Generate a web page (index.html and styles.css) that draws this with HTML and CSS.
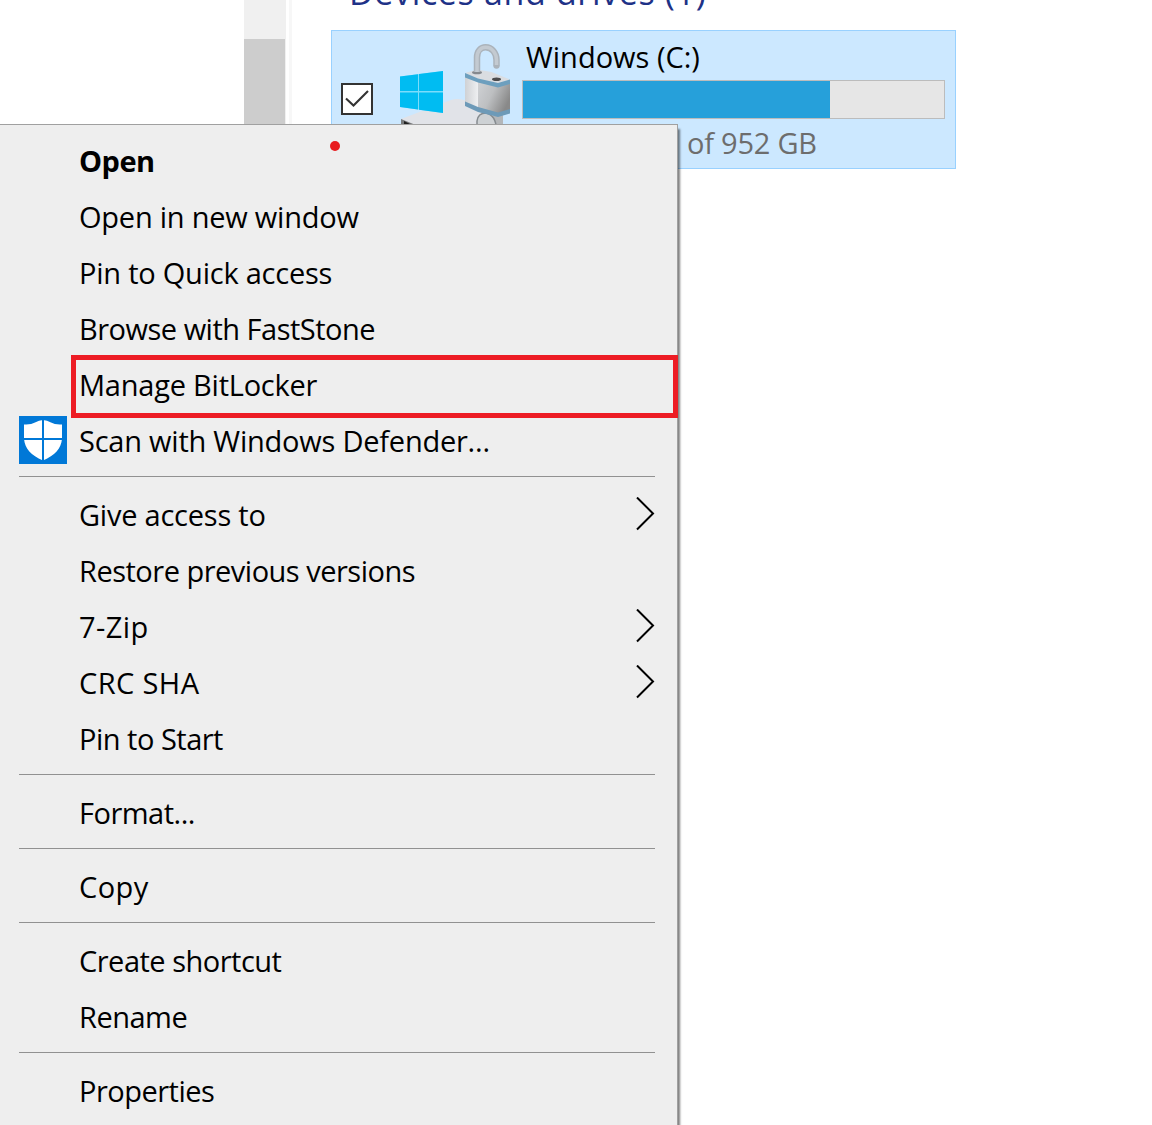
FILE: index.html
```html
<!DOCTYPE html>
<html lang="en">
<head>
  <meta charset="UTF-8" />
  <meta name="viewport" content="width=device-width, initial-scale=1" />
  <title>This PC</title>
  <link rel="stylesheet" href="styles.css">
</head>
<body>
  <div class="explorer">
    <div class="nav-pane"></div>
    <div class="scrollbar"><div class="thumb"></div></div>
    <div class="divider"></div>
    <div class="content">
      <h2 class="group-title">Devices and drives (1)</h2>
      <div class="drive">
        <div class="checkbox">
          <svg width="28" height="28" viewBox="0 0 28 28"><path d="M3 13.500 L10.500 20.500 L25 6" fill="none" stroke="#333" stroke-width="2.100"/></svg>
        </div>
        <svg class="drive-icon" width="120" height="94" viewBox="0 0 120 94">
          <defs>
            <linearGradient id="side" x1="0" x2="1" y1="0" y2="0"><stop offset="0" stop-color="#cfd1d4"/><stop offset="1" stop-color="#eeeff1"/></linearGradient>
            <linearGradient id="front" x1="0" x2="1" y1="0" y2="0.500"><stop offset="0" stop-color="#d0d2d5"/><stop offset="0.500" stop-color="#bdbfc1"/><stop offset="1" stop-color="#898989"/></linearGradient>
          </defs>
          <!-- disk -->
          <path d="M11 83 L61 64 Q67 62 74 64 L113 77 V94 H11z" fill="#e1e3e8"/>
          <path d="M11 83 L38 94 H11z" fill="#77797b"/>
          <path d="M14 85 L32 94 H14z" fill="#202020"/>
          <!-- windows logo -->
          <path d="M10 40.500 L53 35 V77 L10 71z" fill="#7bdcfb"/>
          <path d="M10 40.500 L28 38.200 V55 H10z M29 38 L53 35 V55 H29z M10 56.500 H28 V73.500 L10 71z M29 56.500 H53 V77 L29 73.700z" fill="#00bcf2"/>
          <!-- padlock -->
          <path d="M100 80 L113 79 V94 H100z" fill="#b3b6b9"/>
          <path d="M87 94 V85 Q88 77 96 77 Q106 79 106.500 94z" fill="#cdd1d4" stroke="#858b8f" stroke-width="1.500"/>
          <path d="M75 37 L87 33.500 L101.500 36 L120 43.500 L108 48 L88 43z" fill="#dadde1"/>
          <path d="M75 40 L88 45 V73 L75 68z" fill="url(#side)"/>
          <path d="M88 45 L108 50 L120 46 V75 L108 79 L88 73z" fill="url(#front)"/>
          <path d="M75 37 L88 42.500 L108 47 L120 43.500 V48 L108 51.500 L88 46.500 L75 41.500z" fill="#6d9fbe"/>
          <path d="M75 65.500 L88 71 L108 76.500 L120 73 V77.500 L108 81 L88 76 L75 70z" fill="#6d9ab8"/>
          <ellipse cx="87" cy="36.500" rx="5" ry="1.800" fill="#85898e"/>
          <path d="M87 36 V21.500 C87 15 91 11.300 95.500 11.300 C102 11.300 106.500 17 106.500 24 V29.500" fill="none" stroke="#abb3bb" stroke-width="6.500"/>
          <path d="M87 36 V21.500 C87 15 91 11.300 95.500 11.300 C102 11.300 106.500 17 106.500 24 V30" fill="none" stroke="#c3cad1" stroke-width="3.500"/>
          <path d="M103.300 29 H109.700 Q110 32.700 106.500 32.700 Q103 32.700 103.300 29z" fill="#abb3bb"/>
          <ellipse cx="106.500" cy="43.300" rx="4.500" ry="1.800" fill="#4b4b4d"/>
        </svg>
        <div class="drive-info">
          <div class="drive-name">Windows (C:)</div>
          <div class="bar"><div class="bar-fill" style="width: 72.9%"></div></div>
          <div class="drive-space tight">of 952 GB</div>
        </div>
      </div>
    </div>
  </div>

  <div class="menu">
    <div class="item default"><span>Open</span></div>
    <div class="item tight"><span>Open in new window</span></div>
    <div class="item tight"><span>Pin to Quick access</span></div>
    <div class="item tighter"><span>Browse with FastStone</span></div>
    <div class="item tight"><span>Manage BitLocker</span></div>
    <div class="item tight">
      <svg class="shield" width="48" height="48" viewBox="0 0 48 48">
        <rect width="48" height="48" fill="#0078d7"/>
        <path d="M24 4 Q28 4 32 6.500 Q36 9 43 8.500 V23 C42 33 36 39 24 44.500 C12 39 6 33 5 23 V8.500 Q12 9 16 6.500 Q20 4 24 4z" fill="#fff"/>
        <path d="M24 3 V45 M4 23 H44" stroke="#0078d7" stroke-width="2"/>
      </svg>
      <span>Scan with Windows Defender...</span>
    </div>
    <div class="separator"></div>
    <div class="item tight"><span>Give access to</span><svg class="arrow" width="20" height="34" viewBox="0 0 20 34"><path d="M1 0.500 L17 16.500 L1 32.500"/></svg></div>
    <div class="item tighter"><span>Restore previous versions</span></div>
    <div class="item wide"><span>7-Zip</span><svg class="arrow" width="20" height="34" viewBox="0 0 20 34"><path d="M1 0.500 L17 16.500 L1 32.500"/></svg></div>
    <div class="item wide"><span>CRC SHA</span><svg class="arrow" width="20" height="34" viewBox="0 0 20 34"><path d="M1 0.500 L17 16.500 L1 32.500"/></svg></div>
    <div class="item tighter"><span>Pin to Start</span></div>
    <div class="separator"></div>
    <div class="item tighter"><span>Format...</span></div>
    <div class="separator"></div>
    <div class="item wide"><span>Copy</span></div>
    <div class="separator"></div>
    <div class="item tighter"><span>Create shortcut</span></div>
    <div class="item tighter"><span>Rename</span></div>
    <div class="separator"></div>
    <div class="item tighter"><span>Properties</span></div>
    <div class="highlight"></div>
    <div class="dot"></div>
  </div>
</body>
</html>
```
FILE: styles.css
```css
html, body {
  margin: 0;
  height: 100%;
  overflow: hidden;
  background: #fff;
  color: #000;
  font-family: "Open Sans", "Noto Sans", sans-serif;
  font-size: 29px;
}
.explorer {
  display: flex;
  height: 100vh;
}
.nav-pane {
  width: 244px;
}
.scrollbar {
  width: 42px;
  background: #f0f0f0;
}
.thumb {
  width: 41px;
  height: 400px;
  margin-top: 39px;
  background: #cdcdcd;
}
.divider {
  width: 3px;
  margin-left: 3px;
  background: #f7f7f7;
}
.content {
  flex: 1;
  padding-left: 39px;
}
.group-title {
  height: 40px;
  margin: -28px 0 18px 18px;
  font-size: 34px;
  font-weight: 400;
  letter-spacing: 0.65px;
  line-height: 40px;
  color: #1e3287;
}
.drive {
  display: flex;
  box-sizing: border-box;
  width: 625px;
  height: 139px;
  border: 1px solid #99d1ff;
  background: #cce8ff;
}
.checkbox {
  width: 28px;
  height: 28px;
  margin: 52px 0 0 9px;
  border: 2px solid #333;
  background: #fff;
}
.checkbox svg {
  display: block;
}
.drive-icon {
  margin: 5px 0 0 17px;
}
.drive-info {
  width: 423px;
  margin-left: 12px;
}
.drive-name {
  height: 49px;
  padding-left: 4px;
  line-height: 52px;
}
.bar {
  height: 37px;
  border: 1px solid #bcbcbc;
  background: #e6e6e6;
}
.bar-fill {
  height: 100%;
  background: #26a0da;
}
.drive-space {
  padding-left: 165px;
  line-height: 48px;
  color: #6d6d6d;
}
.menu {
  position: absolute;
  top: 124px;
  left: 0;
  box-sizing: border-box;
  width: 678px;
  height: 1030px;
  padding-top: 9px;
  border: 1px solid #a0a0a0;
  border-left: 0;
  background: #eee;
  box-shadow: 3px 4px 2px -1px rgba(0, 0, 0, 0.5);
}
.item {
  display: flex;
  align-items: center;
  height: 56px;
  padding: 0 21px 0 79px;
}
.item span {
  flex: 1;
  line-height: 54px;
  padding-bottom: 2px;
  white-space: nowrap;
}
.default {
  font-weight: 700;
  letter-spacing: -0.5px;
}
.tight {
  letter-spacing: -0.23px;
}
.tighter {
  letter-spacing: -0.5px;
}
.wide {
  letter-spacing: 0.4px;
}
.shield {
  margin: 0 12px 4px -60px;
}
.arrow {
  margin-bottom: 4px;
  fill: none;
  stroke: #000;
  stroke-width: 2;
}
.separator {
  height: 1px;
  margin: 6px 22px 11px 19px;
  background: #919191;
}
.highlight {
  position: absolute;
  top: 230px;
  left: 71px;
  width: 597px;
  height: 53px;
  border: 5px solid #ed1c24;
}
.dot {
  position: absolute;
  top: 16px;
  left: 330px;
  width: 10px;
  height: 10px;
  border-radius: 50%;
  background: #e81a1d;
}
```
